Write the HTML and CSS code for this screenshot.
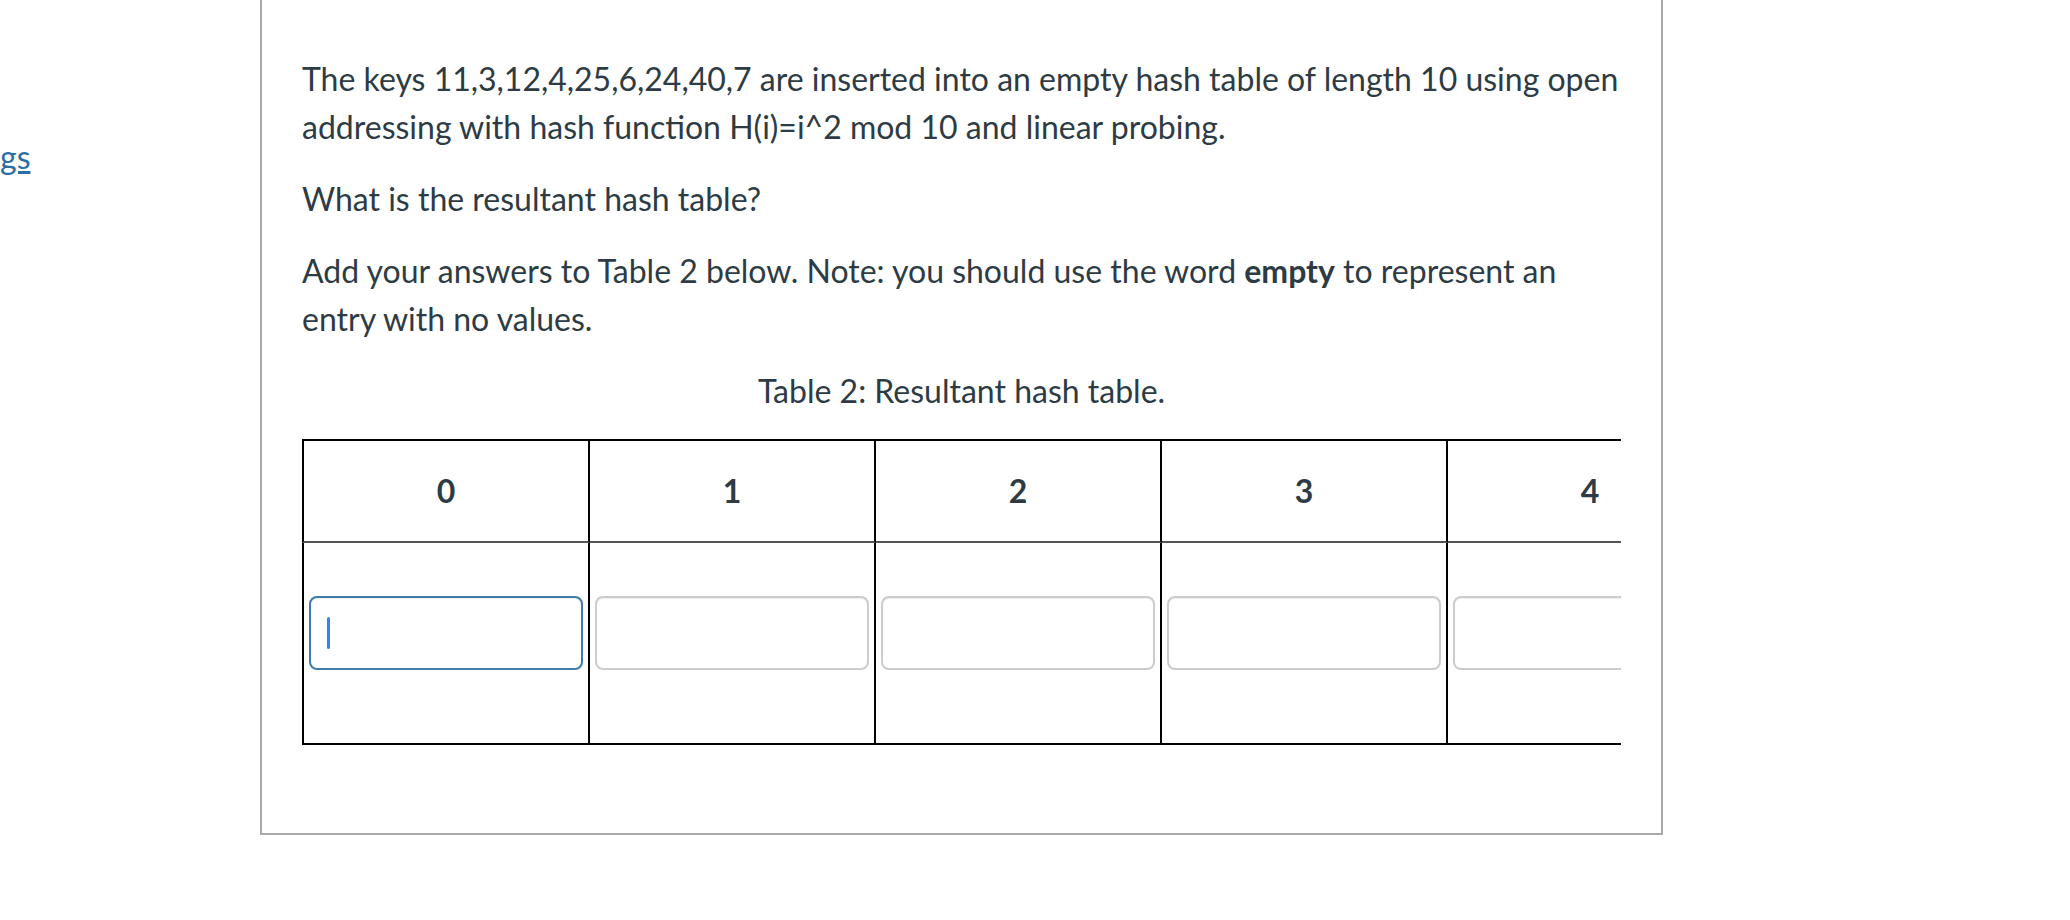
FILE: index.html
```html
<!DOCTYPE html>
<html lang="en">
<head>
<meta charset="utf-8">
<title>Quiz question</title>
<link rel="stylesheet" href="styles.css">
</head>
<body>
<div class="page">
  <nav class="sidenav"><a class="navlink" href="#">gs</a></nav>
  <main class="panel">
    <p>The keys 11,3,12,4,25,6,24,40,7 are inserted into an empty hash table of length 10 using open addressing with hash function H(i)=i^2 mod 10 and linear probing.</p>
    <p>What is the resultant hash table?</p>
    <p>Add your answers to Table 2 below. Note: you should use the word <strong>empty</strong> to represent an entry with no values.</p>
    <p class="caption">Table 2: Resultant hash table.</p>
    <div class="table-wrap">
      <table class="hash">
        <thead>
          <tr><th>0</th><th>1</th><th>2</th><th>3</th><th>4</th><th>5</th><th>6</th><th>7</th><th>8</th><th>9</th></tr>
        </thead>
        <tbody>
          <tr>
            <td><div class="answer focused"><span class="caret"></span></div></td>
            <td><div class="answer"></div></td>
            <td><div class="answer"></div></td>
            <td><div class="answer"></div></td>
            <td><div class="answer"></div></td>
            <td><div class="answer"></div></td>
            <td><div class="answer"></div></td>
            <td><div class="answer"></div></td>
            <td><div class="answer"></div></td>
            <td><div class="answer"></div></td>
          </tr>
        </tbody>
      </table>
    </div>
  </main>
</div>
</body>
</html>
```
FILE: styles.css
```css
body {
  margin: 0;
  background: #ffffff;
  font-family: Lato, "Noto Sans", sans-serif;
  color: #2d3b45;
}

.page {
  display: flex;
  align-items: flex-start;
}

.sidenav {
  width: 260px;
  flex: none;
  padding-top: 133px;
  font-size: 32px;
  line-height: 48px;
}

.navlink {
  color: #2b6ea6;
  text-decoration: underline;
}

.panel {
  width: 1319px;
  flex: none;
  border: 2px solid #a9a9a9;
  border-top: none;
  padding: 55px 40px 88px;
  font-size: 32px;
  line-height: 48px;
}

.panel p {
  margin: 0 0 24px;
}

.panel strong {
  font-weight: 700;
}

.caption {
  text-align: center;
}

.table-wrap {
  overflow: hidden;
}

.hash {
  border-collapse: separate;
  border-spacing: 0;
  table-layout: fixed;
  width: 2862px;
}

.hash th {
  box-sizing: border-box;
  width: 286px;
  border-top: 2px solid #000;
  border-bottom: 2px solid #555;
  border-right: 2px solid #000;
  padding: 26px 5px;
  font-weight: 700;
  text-align: center;
  line-height: 48px;
}

.hash th:first-child {
  width: 288px;
  border-left: 2px solid #000;
}

.hash td {
  border-right: 2px solid #000;
  border-bottom: 2px solid #000;
  padding: 53px 5px 73px;
  vertical-align: top;
}

.hash td:first-child {
  border-left: 2px solid #000;
}

.answer {
  box-sizing: border-box;
  height: 74px;
  border: 2px solid #cccccc;
  border-radius: 8px;
  background: #fff;
  box-shadow: inset 0 1px 1px rgba(0, 0, 0, 0.075);
  display: flex;
  align-items: center;
  padding-left: 16px;
}

.answer.focused {
  border-color: #3d7cab;
}

.caret {
  width: 3px;
  height: 32px;
  background: #3a7ff5;
  border-radius: 2px;
}
```
